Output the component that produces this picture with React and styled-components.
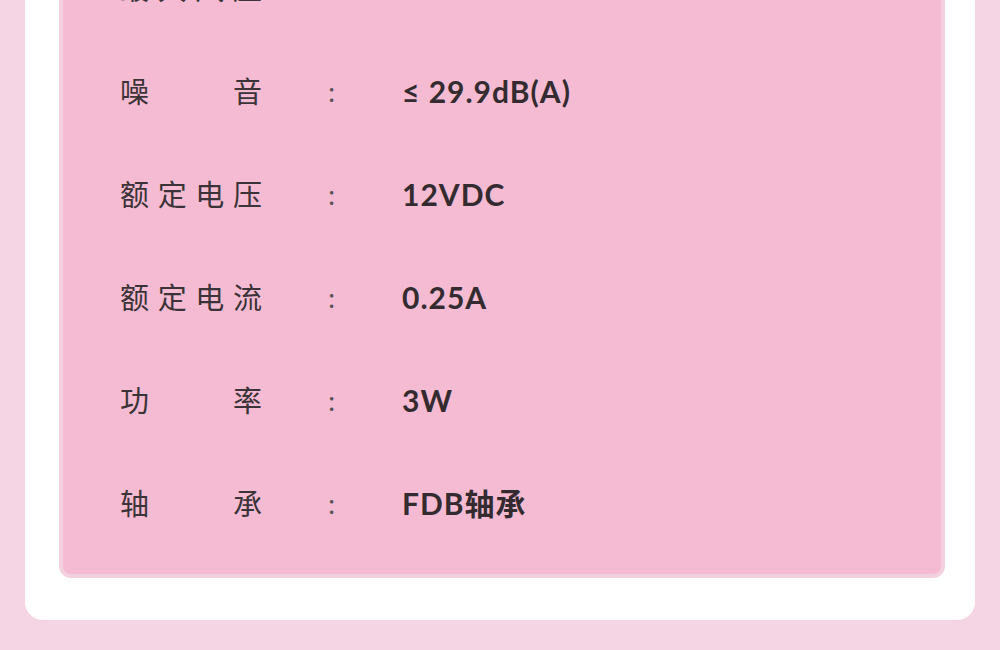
import React from 'react';
import styled, { createGlobalStyle } from 'styled-components';

const GlobalStyle = createGlobalStyle`
  html, body {
    margin: 0;
    padding: 0;
    background: #f5d5e3;
    overflow: hidden;
  }
  body {
    font-family: Lato, "Noto Sans CJK SC", sans-serif;
  }
`;

const Page = styled.div`
  width: 1000px;
  height: 650px;
  overflow: hidden;
  background: #f5d5e3;
`;

const Card = styled.div`
  margin: -132px 25px 0 25px;
  padding: 46px 30px 42px 34px;
  background: #ffffff;
  border-radius: 18px;
`;

const SpecPanel = styled.div`
  background: #f5bbd2;
  border: 4px solid #f3d0de;
  border-radius: 12px;
  padding: 18px 0 20px 57px;
`;

const Row = styled.div`
  display: grid;
  grid-template-columns: 142px 140px 1fr;
  align-items: center;
  height: 103px;
`;

const Label = styled.div`
  font-family: "Noto Sans CJK SC", sans-serif;
  font-size: 29px;
  color: #3b3337;
  text-align: justify;
  text-align-last: justify;
  line-height: 1;
`;

const Colon = styled.div`
  font-family: "Noto Sans CJK SC", sans-serif;
  font-size: 26px;
  color: #5a5156;
  padding-left: 66px;
  line-height: 1;
`;

const Value = styled.div`
  font-family: Lato, "Noto Sans CJK SC", sans-serif;
  font-weight: 700;
  font-size: 30px;
  letter-spacing: 1px;
  color: #332b2f;
  line-height: 1;
`;

const specs = [
  ['最大风压', '2.36mmH2O'],
  ['噪音', '≤ 29.9dB(A)'],
  ['额定电压', '12VDC'],
  ['额定电流', '0.25A'],
  ['功率', '3W'],
  ['轴承', 'FDB轴承'],
];

export default function App() {
  return (
    <Page>
      <GlobalStyle />
      <Card>
        <SpecPanel>
          {specs.map(([label, value]) => (
            <Row key={label}>
              <Label>{label}</Label>
              <Colon>:</Colon>
              <Value>{value}</Value>
            </Row>
          ))}
        </SpecPanel>
      </Card>
    </Page>
  );
}
